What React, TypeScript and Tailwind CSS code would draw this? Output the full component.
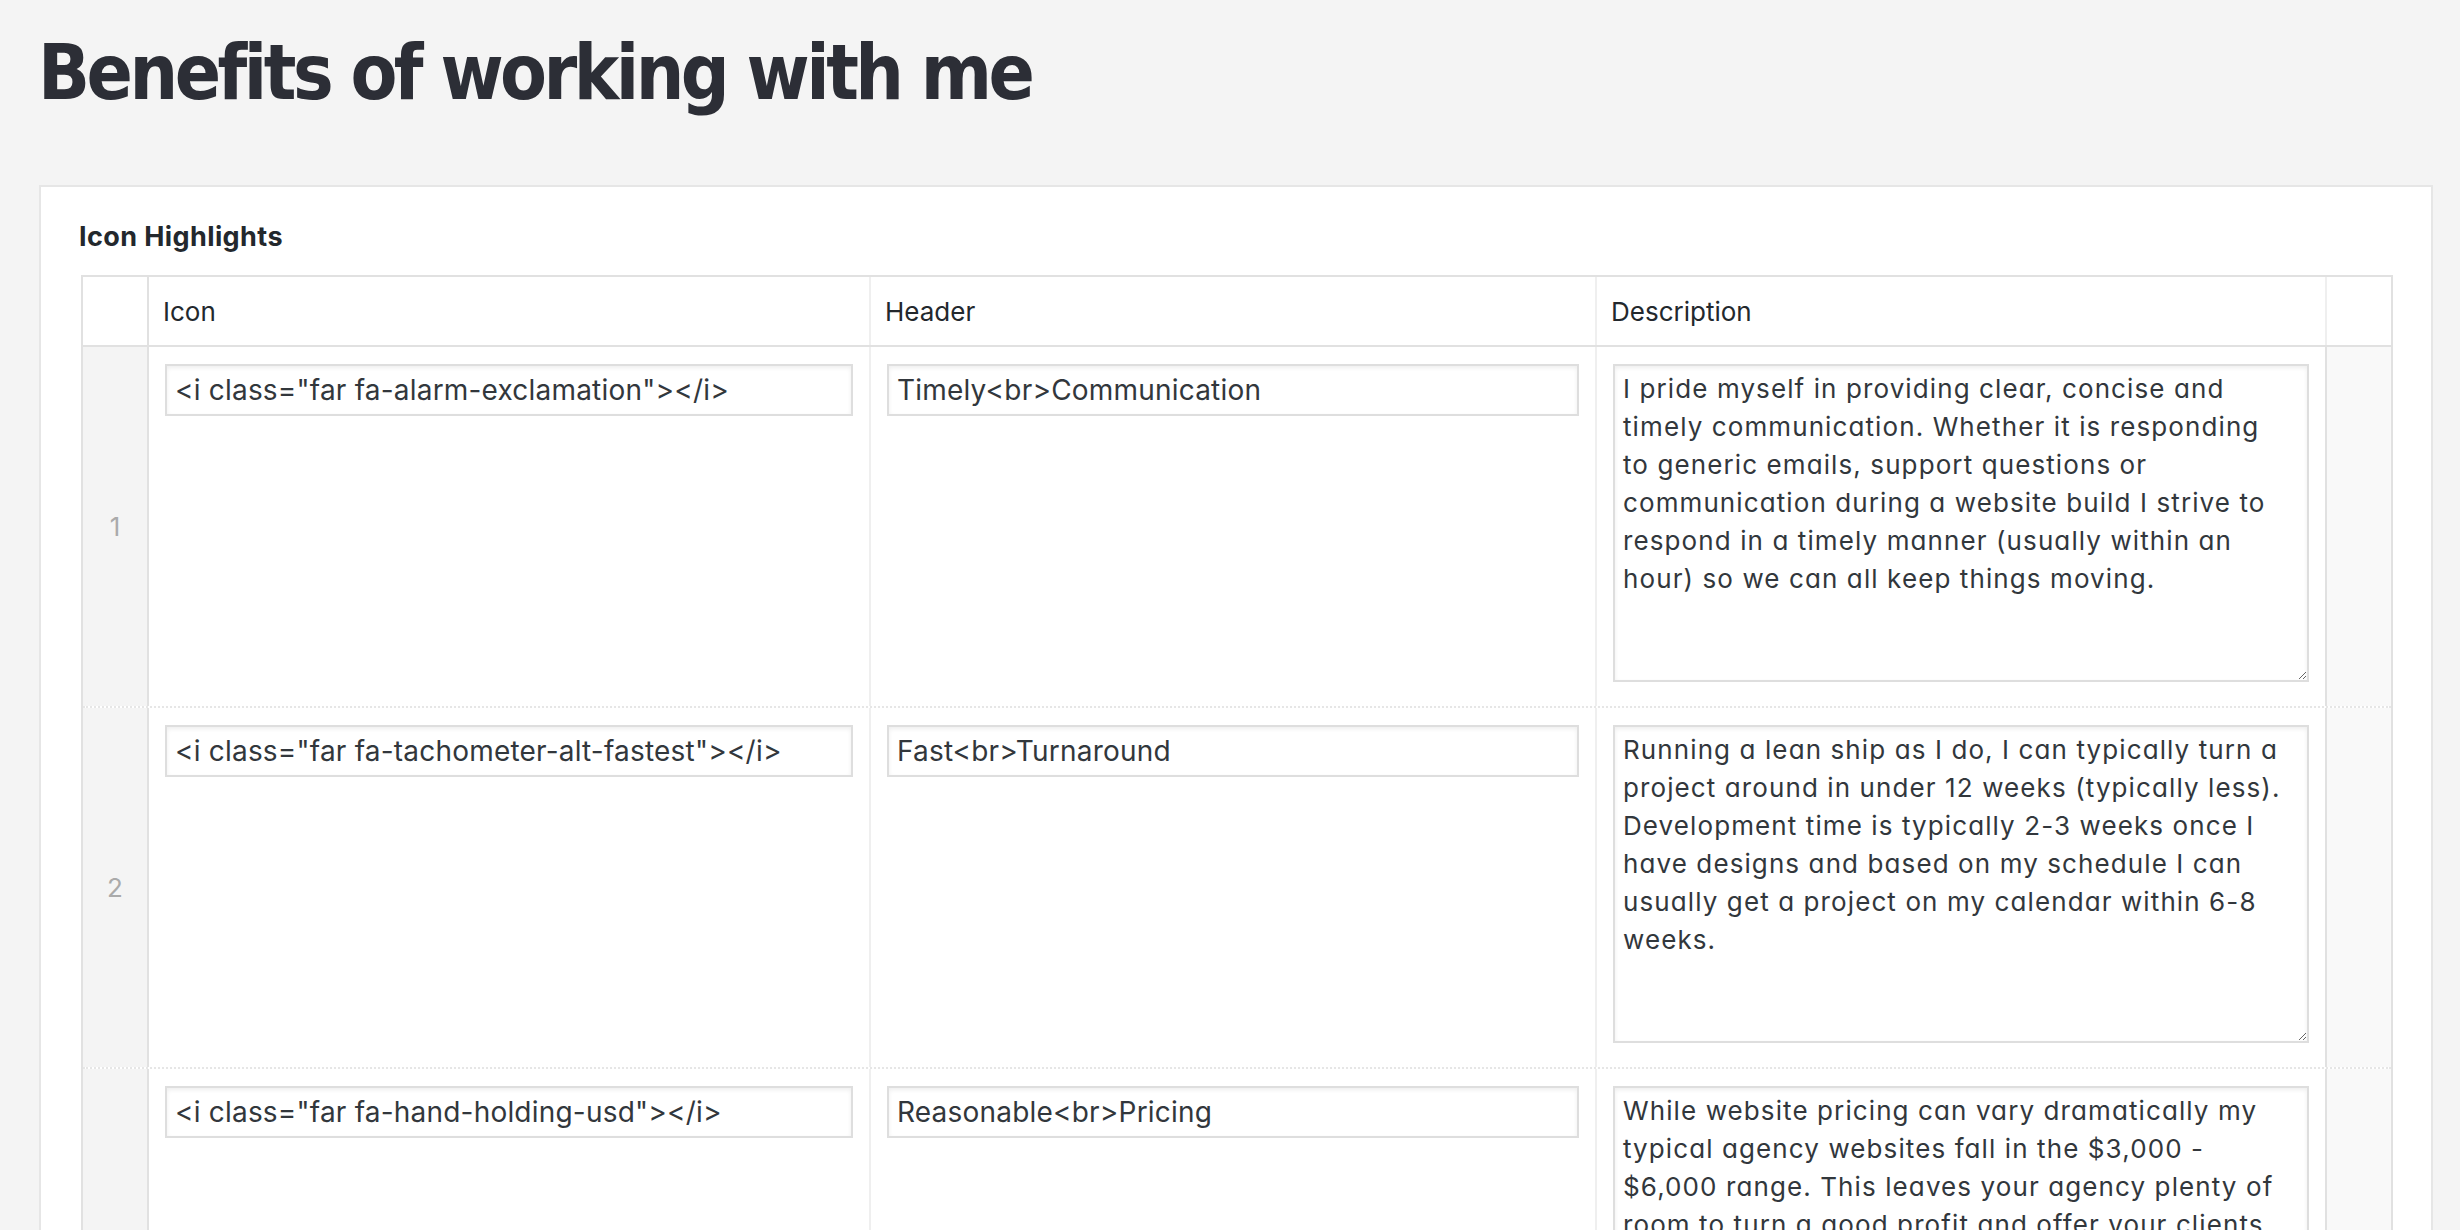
import React from "react";

type Highlight = {
  icon: string;
  header: string;
  description: string[];
};

const HIGHLIGHTS: Highlight[] = [
  {
    icon: '<i class="far fa-alarm-exclamation"></i>',
    header: "Timely<br>Communication",
    description: [
      "I pride myself in providing clear, concise and",
      "timely communication. Whether it is responding",
      "to generic emails, support questions or",
      "communication during a website build I strive to",
      "respond in a timely manner (usually within an",
      "hour) so we can all keep things moving.",
    ],
  },
  {
    icon: '<i class="far fa-tachometer-alt-fastest"></i>',
    header: "Fast<br>Turnaround",
    description: [
      "Running a lean ship as I do, I can typically turn a",
      "project around in under 12 weeks (typically less).",
      "Development time is typically 2-3 weeks once I",
      "have designs and based on my schedule I can",
      "usually get a project on my calendar within 6-8",
      "weeks.",
    ],
  },
  {
    icon: '<i class="far fa-hand-holding-usd"></i>',
    header: "Reasonable<br>Pricing",
    description: [
      "While website pricing can vary dramatically my",
      "typical agency websites fall in the $3,000 -",
      "$6,000 range. This leaves your agency plenty of",
      "room to turn a good profit and offer your clients",
      "a great value.",
    ],
  },
];

const UI_FONT = "font-['Inter','Noto_Sans',sans-serif]";

function TextInput({ value }: { value: string }) {
  return (
    <input
      type="text"
      defaultValue={value}
      className={`h-[52px] w-full border-2 border-[#dedede] bg-white px-[8px] text-[28px] tracking-[0.2px] text-[#32373c] shadow-[inset_0_2px_4px_rgba(0,0,0,0.07)] outline-none ${UI_FONT}`}
    />
  );
}

function Row({ item, index, last }: { item: Highlight; index: number; last: boolean }) {
  return (
    <div
      className={`grid grid-cols-[66px_722px_726px_1fr_66px] ${
        last ? "" : "border-b-2 border-dotted border-[#e6e6e6]"
      }`}
    >
      <div className="flex items-center justify-center border-r-2 border-[#e1e1e1] bg-[#f4f4f4] text-[26px] text-[#aaaaaa]">
        {index + 1}
      </div>
      <div className="border-r-2 border-[#efefef] px-4 pt-[17px] pb-[24px]">
        <TextInput value={item.icon} />
      </div>
      <div className="border-r-2 border-[#efefef] px-4 pt-[17px] pb-[24px]">
        <TextInput value={item.header} />
      </div>
      <div className="px-4 pt-[17px] pb-[24px]">
        <textarea
          wrap="off"
          defaultValue={item.description.join("\n")}
          className="block h-[318px] w-full overflow-hidden whitespace-pre border-2 border-[#dedede] bg-white px-[8px] pt-[4px] font-['Inter',sans-serif] text-[26px] leading-[38px] tracking-[1.1px] text-[#32373c] shadow-[inset_0_2px_4px_rgba(0,0,0,0.07)] outline-none [font-feature-settings:'cv11']"
        />
      </div>
      <div className="border-l-2 border-[#e1e1e1] bg-[#f9f9f9]" />
    </div>
  );
}

export default function App() {
  return (
    <div className={`min-h-screen bg-[#f4f4f4] pt-[35px] pr-[27px] pl-[38px] pb-10 ${UI_FONT}`}>
      <h1 className="font-['Liberation_Sans_Narrow','DejaVu_Sans_Condensed','Liberation_Sans',sans-serif] text-[76px] leading-none font-bold tracking-[-3.5px] text-[#2c2e36]">
        Benefits of working with me
      </h1>

      <div className="mt-[74px] ml-px border-2 border-[#e6e6e6] bg-white pt-8 pr-[38px] pb-10 pl-10">
        <div className="mb-5 -ml-[2px] text-[27px] leading-[36px] font-bold tracking-[0.4px] text-[#23282d]">
          Icon Highlights
        </div>

        <div className="border-2 border-[#e1e1e1]">
          <div className="grid h-[70px] grid-cols-[66px_722px_726px_1fr_66px] border-b-2 border-[#e1e1e1] text-[26px] text-[#23282d]">
            <div className="border-r-2 border-[#e1e1e1]" />
            <div className="flex items-center border-r-2 border-[#efefef] px-[14px]">Icon</div>
            <div className="flex items-center border-r-2 border-[#efefef] px-[14px]">Header</div>
            <div className="flex items-center px-[14px]">Description</div>
            <div className="border-l-2 border-[#efefef]" />
          </div>
          {HIGHLIGHTS.map((h, i) => (
            <Row key={h.header} item={h} index={i} last={i === HIGHLIGHTS.length - 1} />
          ))}
        </div>
      </div>
    </div>
  );
}
